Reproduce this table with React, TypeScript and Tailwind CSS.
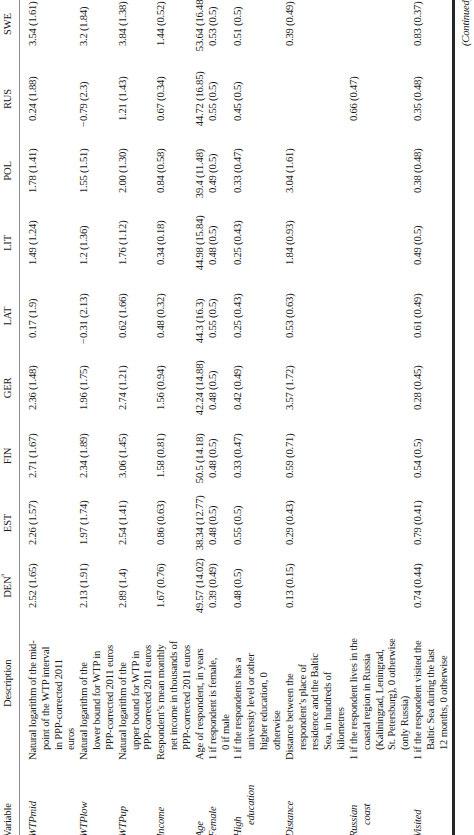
import React from "react";

const countries = ["DEN", "EST", "FIN", "GER", "LAT", "LIT", "POL", "RUS", "SWE"];

interface row {
  name: string[];
  desc: string[];
  values: string[];
}

const rows: row[] = [
  {
    name: ["WTPmid"],
    desc: ["Natural logarithm of the mid-", "point of the WTP interval", "in PPP-corrected 2011", "euros"],
    values: ["2.52 (1.65)", "2.26 (1.57)", "2.71 (1.67)", "2.36 (1.48)", "0.17 (1.9)", "1.49 (1.24)", "1.78 (1.41)", "0.24 (1.88)", "3.54 (1.61)"],
  },
  {
    name: ["WTPlow"],
    desc: ["Natural logarithm of the", "lower bound for WTP in", "PPP-corrected 2011 euros"],
    values: ["2.13 (1.91)", "1.97 (1.74)", "2.34 (1.89)", "1.96 (1.75)", "\u22120.31 (2.13)", "1.2 (1.36)", "1.55 (1.51)", "\u22120.79 (2.3)", "3.2 (1.84)"],
  },
  {
    name: ["WTPup"],
    desc: ["Natural logarithm of the", "upper bound for WTP in", "PPP-corrected 2011 euros"],
    values: ["2.89 (1.4)", "2.54 (1.41)", "3.06 (1.45)", "2.74 (1.21)", "0.62 (1.66)", "1.76 (1.12)", "2.00 (1.30)", "1.21 (1.43)", "3.84 (1.38)"],
  },
  {
    name: ["Income"],
    desc: ["Respondent\u2019s mean monthly", "net income in thousands of", "PPP-corrected 2011 euros"],
    values: ["1.67 (0.76)", "0.86 (0.63)", "1.58 (0.81)", "1.56 (0.94)", "0.48 (0.32)", "0.34 (0.18)", "0.84 (0.58)", "0.67 (0.34)", "1.44 (0.52)"],
  },
  {
    name: ["Age"],
    desc: ["Age of respondent, in years"],
    values: ["49.57 (14.02)", "38.34 (12.77)", "50.5 (14.18)", "42.24 (14.88)", "44.3 (16.3)", "44.98 (15.84)", "39.4 (11.48)", "44.72 (16.85)", "53.64 (16.48)"],
  },
  {
    name: ["Female"],
    desc: ["1 if respondent is female,", "0 if male"],
    values: ["0.39 (0.49)", "0.48 (0.5)", "0.48 (0.5)", "0.48 (0.5)", "0.55 (0.5)", "0.48 (0.5)", "0.49 (0.5)", "0.55 (0.5)", "0.53 (0.5)"],
  },
  {
    name: ["High", "education"],
    desc: ["1 if the respondents has a", "university level or other", "higher education, 0", "otherwise"],
    values: ["0.48 (0.5)", "0.55 (0.5)", "0.33 (0.47)", "0.42 (0.49)", "0.25 (0.43)", "0.25 (0.43)", "0.33 (0.47)", "0.45 (0.5)", "0.51 (0.5)"],
  },
  {
    name: ["Distance"],
    desc: ["Distance between the", "respondent\u2019s place of", "residence and the Baltic", "Sea, in hundreds of", "kilometres"],
    values: ["0.13 (0.15)", "0.29 (0.43)", "0.59 (0.71)", "3.57 (1.72)", "0.53 (0.63)", "1.84 (0.93)", "3.04 (1.61)", "", "0.39 (0.49)"],
  },
  {
    name: ["Russian", "coast"],
    desc: ["1 if the respondent lives in the", "coastal region in Russia", "(Kaliningrad, Leningrad,", "St. Petersburg), 0 otherwise", "(only Russia)"],
    values: ["", "", "", "", "", "", "", "0.66 (0.47)", ""],
  },
  {
    name: ["Visited"],
    desc: ["1 if the respondent visited the", "Baltic Sea during the last", "12 months, 0 otherwise"],
    values: ["0.74 (0.44)", "0.79 (0.41)", "0.54 (0.5)", "0.28 (0.45)", "0.61 (0.49)", "0.49 (0.5)", "0.38 (0.48)", "0.35 (0.48)", "0.83 (0.37)"],
  },
];

// lines up the first number on its decimal point
function Value(props: { text: string }) {
  if (!props.text) return <div />;
  const dot = props.text.indexOf(".");
  const whole = props.text.slice(0, dot);
  const rest = props.text.slice(dot);
  return (
    <div className="flex whitespace-nowrap">
      <div className="flex w-[10px] justify-end">
        <span className="whitespace-nowrap">{whole}</span>
      </div>
      <span>{rest}</span>
    </div>
  );
}

export default function App() {
  return (
    <div className="w-[474px] h-[835px] overflow-hidden bg-white">
      <div
        className="w-[850px] h-[474px] origin-top-left -rotate-90 translate-y-[838px] flex flex-col text-[10.6px] tracking-[-0.2px] leading-[12.85px] text-[#1a1a1a]"
        style={{ fontFamily: '"Liberation Serif", "Times New Roman", serif' }}
      >
        <div className="grid grid-cols-[77px_147px_63px_67px_68px_72px_73px_72px_72px_75px_1fr] pl-[1px]">
          {/* header */}
          <div className="pt-[2px] pb-[4px]">Variable</div>
          <div className="pt-[2px] pb-[4px] pl-[53px]">Description</div>
          {countries.map((c) => (
            <div key={c} className="pt-[2px] pb-[4px] pl-[5px]">
              <div className="w-[44px] text-center">
                {c}
                {c === "DEN" ? <sup className="text-[6px] align-[4px]">a</sup> : null}
              </div>
            </div>
          ))}
          <div className="col-span-full -ml-[1px] h-px bg-[#8c8c8c]" />
          <div className="col-span-full h-[7px]" />

          {rows.map((r, i) => (
            <React.Fragment key={i}>
              <div className="italic">
                {r.name.map((n, j) => (
                  <div key={j} className={j > 0 ? "pl-[12px]" : ""}>
                    {n}
                  </div>
                ))}
              </div>
              <div className="whitespace-nowrap">
                {r.desc.map((d, j) => (
                  <div key={j} className={j > 0 ? "pl-[10px]" : ""}>
                    {d}
                  </div>
                ))}
              </div>
              {r.values.map((v, j) => (
                <Value key={j} text={v} />
              ))}
            </React.Fragment>
          ))}
        </div>
        <div className="h-[1px]" />
        <div className="h-[3px] bg-[#262626]" />
        <div className="mt-[5px] pr-[9px] text-right italic text-[10.6px]">(Continued)</div>
      </div>
    </div>
  );
}
